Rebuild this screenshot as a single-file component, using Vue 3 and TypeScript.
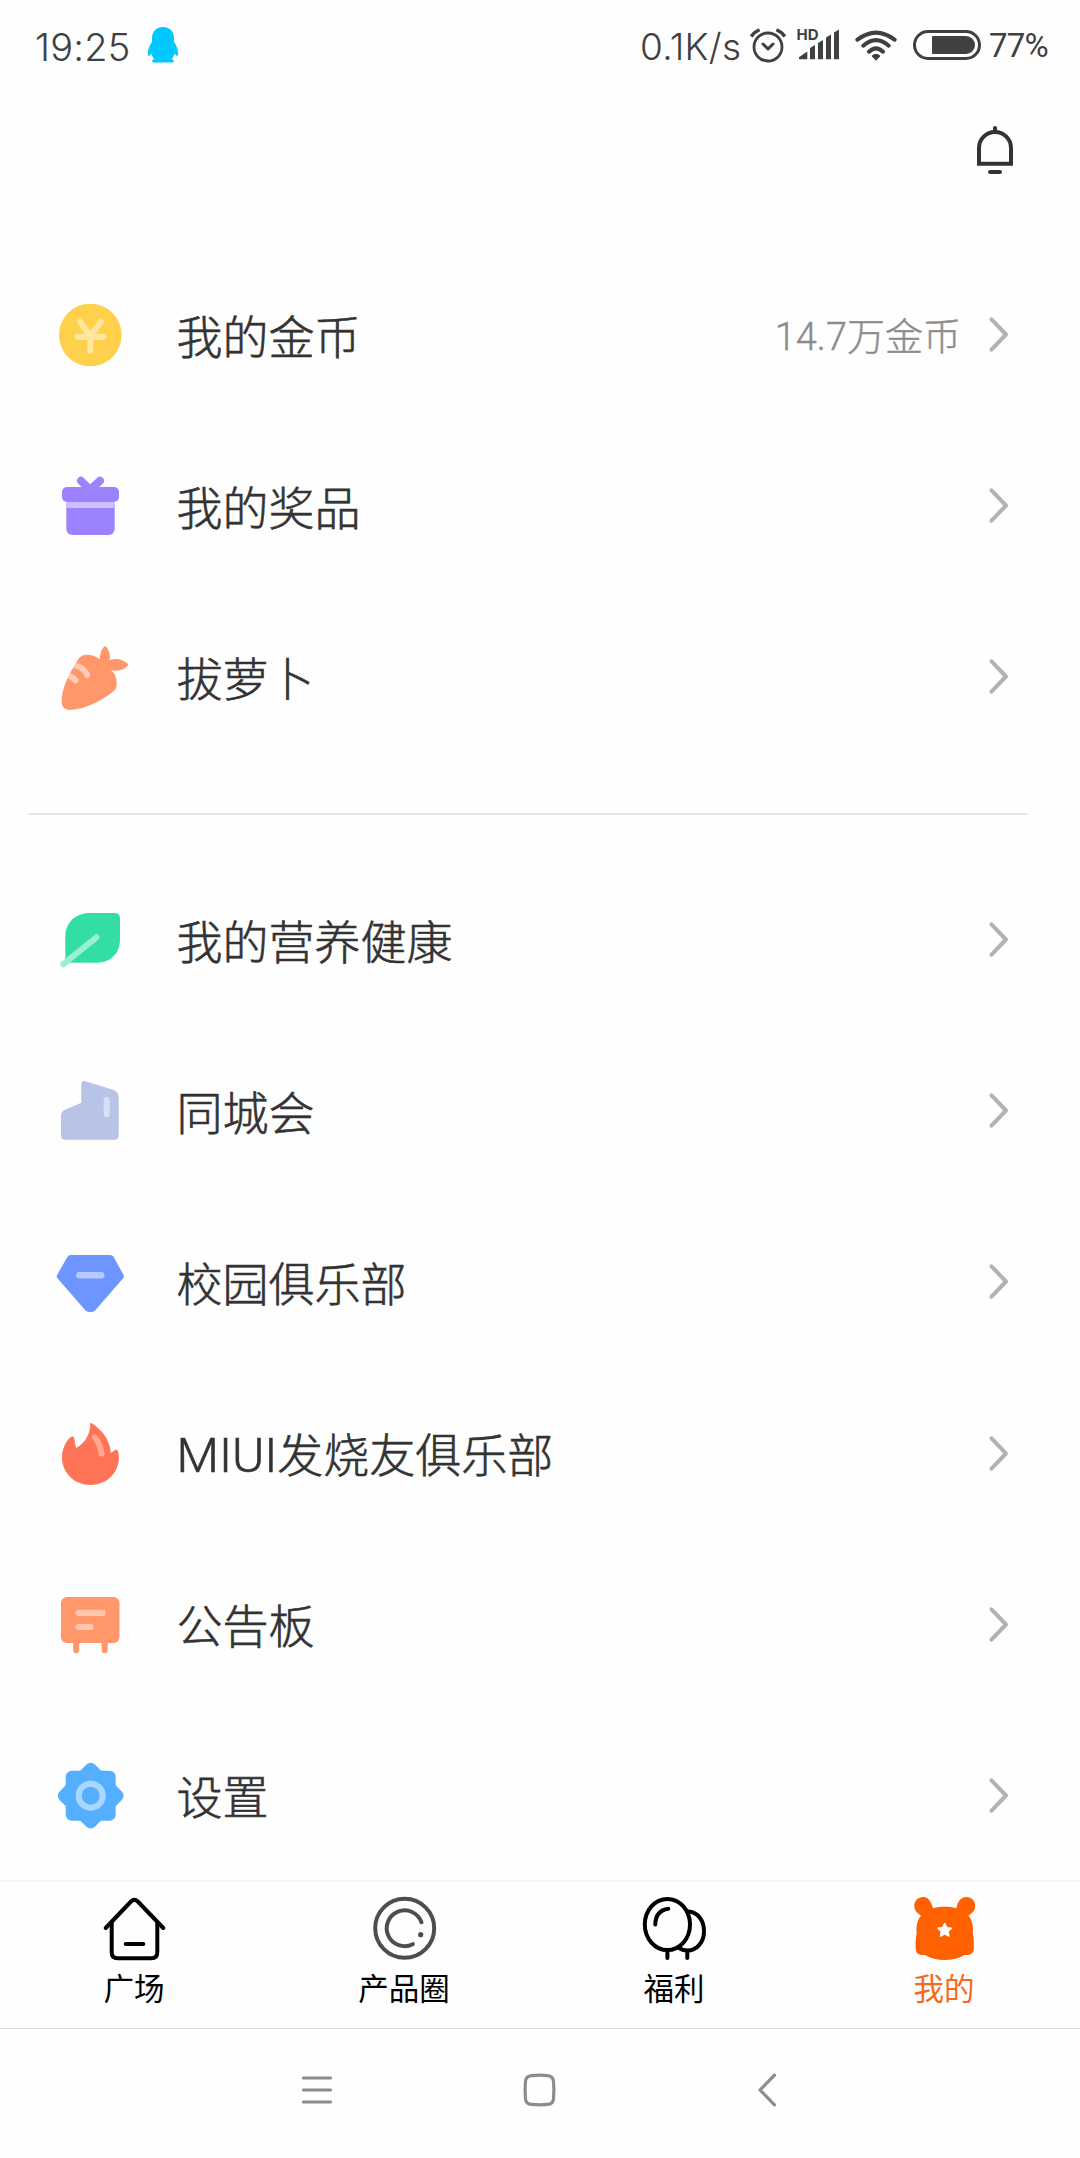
<script setup lang="ts">
interface MenuItem {
  icon: string
  label: string
  latin?: string
  amount?: string
  unit?: string
}

const groups: MenuItem[][] = [
  [
    { icon: 'coin', label: '我的金币', amount: '14.7', unit: '万金币' },
    { icon: 'gift', label: '我的奖品' },
    { icon: 'carrot', label: '拔萝卜' },
  ],
  [
    { icon: 'leaf', label: '我的营养健康' },
    { icon: 'city', label: '同城会' },
    { icon: 'diamond', label: '校园俱乐部' },
    { icon: 'flame', latin: 'MIUI', label: '发烧友俱乐部' },
    { icon: 'board', label: '公告板' },
    { icon: 'gear', label: '设置' },
  ],
]

const tabs = [
  { icon: 'home', label: '广场' },
  { icon: 'circle', label: '产品圈' },
  { icon: 'balloon', label: '福利' },
  { icon: 'bear', label: '我的' },
]
const activeTab = 'bear'
</script>

<template>
  <div class="screen">
    <header class="status">
      <span class="time">19:25</span>
      <svg class="penguin" width="34" height="38" viewBox="0 0 34 38">
        <path fill="#00c8ff" d="M17 1C10.500 1 6 5.500 6 12v4C3.500 19 1.700 24 2 28.500c.2 1.700 1.200 1.700 2.200.4l1.300-1.500c.5 2.200 1.400 4 3 5.700-2 .7-2.700 1.600-2.300 2.500.4.900 1.200 1 2.300 1h17c1.100 0 1.900-.1 2.300-1 .4-.9-.3-1.800-2.300-2.500 1.600-1.700 2.500-3.500 3-5.700l1.300 1.500c1 1.300 2 1.300 2.200-.4.3-4.500-1.500-9.500-4-12.500v-4C28 5.500 23.500 1 17 1z" />
      </svg>
      <span class="speed">0.1K/s</span>
      <svg class="indicators" width="236" height="42" viewBox="0 0 236 42">
        <g fill="none" stroke="#404040" stroke-linecap="round">
          <circle cx="20" cy="23" r="14" stroke-width="2.8" />
          <path stroke-width="3" stroke-linejoin="round" d="M15 20l5 4.800 5-4.800" />
          <path stroke-width="3.400" stroke-linecap="butt" d="M3.200 12.500Q6 8 11.600 5.700M36.800 12.500Q34 8 28.400 5.700" />
          <path stroke-width="4" d="M109.400 15.700Q128 1.500 146.600 15.700M115.300 21.700Q128 10.500 140.700 21.700M121 27.700Q128 21 135 27.700" />
          <rect x="166.500" y="7.500" width="65" height="27" rx="13.500" stroke-width="3" />
        </g>
        <g fill="#404040">
          <text class="hd" x="48.500" y="16">HD</text>
          <path d="M51 35.300v-2l8.300-5.800v7.800zM62 35.300V24l5-3v14.300zM70 35.300V19l5-3v19.300zM78 35.300V13.500l5-3v24.800zM86 35.300V8.500l5-3v29.800z" />
          <path d="M124 32q4-3.300 8 0l-4 4.300z" stroke="#404040" stroke-linejoin="round" />
          <path d="M185 12h33a9 9 0 0 1 0 18h-33a1 1 0 0 1-1-1V13a1 1 0 0 1 1-1z" />
        </g>
      </svg>
      <span class="battery">77%</span>
    </header>

    <div class="topbar">
      <svg width="50" height="60" viewBox="0 0 50 60" fill="none" stroke="#333" stroke-width="4">
        <path d="M9 43.800V28a16 16 0 0 1 32 0v15.800z" />
        <path stroke-linecap="round" d="M25 8v4M20 52h10" />
      </svg>
    </div>

    <main>
      <section v-for="(group, g) in groups" :key="g" class="group">
        <div v-for="item in group" :key="item.icon" class="row">
          <svg class="icon" width="81" height="81" viewBox="0 0 81 81" stroke-linecap="round" stroke-linejoin="round">
            <g v-if="item.icon === 'coin'">
              <circle cx="40.300" cy="41" r="31.300" fill="#ffd04b" />
              <path fill="none" stroke="#ffe79f" stroke-width="6" d="M30 28l10.300 13.700L51 28M27.500 42.700h26M40.300 42.700v14" />
            </g>
            <g v-else-if="item.icon === 'gift'">
              <path fill="none" stroke="#9c82ff" stroke-width="8" d="M31 15.800l9.300 9 9.700-9" />
              <rect x="16.300" y="34" width="48.400" height="36" rx="6" fill="#9c82ff" />
              <rect x="12" y="22" width="57" height="15" rx="5" fill="#9c82ff" />
              <path fill="#cbbfff" d="M16.300 37h48.400v6H16.300z" />
            </g>
            <g v-else-if="item.icon === 'carrot'">
              <clipPath id="carrot-body">
                <path d="M26 27C29 21 32 18.700 37.300 18.700 42 18.700 46 20.500 50 23.300h10L61 34C66 38 67 45 66.700 49c-.2 3.500-2 6-6 8.500C49 66 35 73 20 74c-6 0-8.500-3.500-8.300-9C12 52 17.500 41 26 27z" />
              </clipPath>
              <path fill="#ff976b" d="M26 27C29 21 32 18.700 37.300 18.700 42 18.700 46 20.500 50 23.300 49.400 17.500 52 12.500 54.500 10.200q.5-.4 1 0C58.500 13 61 18.500 59.500 24 66.500 21.500 73.500 23.500 78.300 28.300q.3.400 0 .8C74.500 34 67.500 36 61 34 66 38 67 45 66.700 49c-.2 3.500-2 6-6 8.500C49 66 35 73 20 74c-6 0-8.500-3.500-8.300-9C12 52 17.500 41 26 27z" />
              <path clip-path="url(#carrot-body)" fill="none" stroke="#ffcbb5" stroke-width="6" d="M18 29.500C26 28 33.500 31.500 37.200 39M13 38.500Q22 40 25.700 44.200" />
            </g>
            <g v-else-if="item.icon === 'leaf'">
              <path fill="#32dea4" d="M15.300 63.700v-26C15.300 23.500 25.500 14 40 14h24.500q5.500 0 5.500 5.500V40C70 54 61 63.700 46.500 63.700z" />
              <path fill="none" stroke="#98efd1" stroke-width="6" d="M13.300 65.200l33.200-26.900" />
            </g>
            <g v-else-if="item.icon === 'city'">
              <path fill="#b8c3e8" d="M31.300 32.700V14.500q0-4.300 4.200-3.300L63 19.700q5.700 2 5.700 8V65.500q0 4.200-4.200 4.200H15.200q-4.200 0-4.200-4.200V46q0-5 4.500-6.500z" />
              <path stroke="#d9dff4" stroke-width="6" d="M56.700 30v14.300" />
            </g>
            <g v-else-if="item.icon === 'diamond'">
              <path fill="#6e94ff" d="M20.500 14h40q2 0 3 1.700L73.500 34q.9 1.700-.4 3.200L45.300 69.200q-5 4.300-10 0L7.500 37.200q-1.300-1.500-.4-3.200L17.500 15.700q1-1.700 3-1.700z" />
              <path stroke="#b6c9ff" stroke-width="6.400" d="M29.300 34.300h22" />
            </g>
            <g v-else-if="item.icon === 'flame'" transform="matrix(1 0 0 .968 0 -.9)">
              <path fill="#ff7457" d="M40.300 11.500q.2-.8 1-.3C51.500 17.500 60 28.500 60.800 42c1.500-.3 2.400-1.500 4-2.600 1.300-.8 2.600-.4 3.100 1C68.500 42.500 68.900 45 68.900 47c0 16-12.500 28.400-28.400 28.400S12 63 12 47c0-8.500 3.500-16.500 8.500-21 1.700-1.300 3.300-.8 3.700 1 .8 4 1 7.500 2 10C34.500 32.500 40.500 23 40.300 11.500z" />
              <path fill="none" stroke="#ffa592" stroke-width="6" d="M44.800 26Q50 32.500 51.600 43" />
            </g>
            <g v-else-if="item.icon === 'board'">
              <path stroke="#ff976b" stroke-width="6" d="M26.200 56v10.200M54.700 56v10.200" />
              <rect x="11" y="13" width="58.500" height="46" rx="6" fill="#ff976b" />
              <path stroke="#ffc6ad" stroke-width="6.200" d="M28.600 28.800H52.700M28.600 43H40.500" />
            </g>
            <g v-else>
              <rect x="15.700" y="15.700" width="50" height="50" rx="6" fill="#55afff" />
              <rect x="15.700" y="15.700" width="50" height="50" rx="6" fill="#55afff" transform="rotate(45 40.700 40.700)" />
              <circle cx="40.700" cy="40.700" r="12" fill="none" stroke="#aad7ff" stroke-width="6" />
            </g>
          </svg>
          <span class="label"><span v-if="item.latin" class="latin">{{ item.latin }}</span>{{ item.label }}</span>
          <span v-if="item.amount" class="value"><span class="amount">{{ item.amount }}</span>{{ item.unit }}</span>
          <svg class="chevron" width="24" height="41" viewBox="0 0 24 41">
            <path fill="none" stroke="#b2b2b2" stroke-width="4" stroke-linecap="round" stroke-linejoin="round" d="M3.500 5.300L18 20.500 3.500 35.700" />
          </svg>
        </div>
      </section>
    </main>

    <nav class="tabs">
      <div v-for="tab in tabs" :key="tab.icon" class="tab" :class="{ active: tab.icon === activeTab }">
        <svg width="80" height="70" viewBox="0 0 80 70" fill="none" stroke="#000" stroke-width="4" stroke-linecap="round" stroke-linejoin="round">
          <g v-if="tab.icon === 'home'">
            <path d="M10.700 35L36 8.500q3.400-3.200 6.800 0L68.300 35" />
            <path d="M16.700 30v29.500q0 5.800 5.800 5.800h34q5.800 0 5.800-5.800V30M30.700 51h17.600" />
          </g>
          <g v-else-if="tab.icon === 'circle'" stroke="#4d4d4d">
            <circle cx="39.700" cy="35.300" r="29.500" />
            <path d="M56.500 29.300A17.900 17.900 0 1 0 47.800 51.200" />
            <circle cx="55.700" cy="41.700" r="2.600" fill="#4d4d4d" stroke="none" />
          </g>
          <g v-else-if="tab.icon === 'balloon'">
            <ellipse cx="32.400" cy="31.500" rx="22.600" ry="25.600" />
            <path d="M54 18.500C63 19.500 69 27.500 69 38.300 69 49.500 61.500 57.500 52.500 57.500q-4.500 0-8-2.200" />
            <path d="M32.400 58v7M52.300 58v7M33.300 15.700Q20.500 17.500 20.300 31.500" />
          </g>
          <g v-else>
            <path fill="#ff6100" stroke="none" d="M28 15.200C35 13.300 44.500 13.300 51.500 15.200 52.500 8.500 56 4 61.500 4 66.500 4 70.200 8 70.200 12.700 70.200 17.500 67 20.500 63.500 22.500 67.500 27.500 68.600 34 67.800 40 69 45.500 69 50.500 68.800 56.500 68.500 60.500 65 62.500 59.500 62 54 65.500 47 67 39.700 67 32.500 67 25.500 65.500 20 62 14.500 62.500 11 60.500 10.700 56.500 10.500 50.500 10.500 45.500 11.700 40 10.900 34 12 27.500 16 22.500 12.500 20.500 9.300 17.500 9.300 12.700 9.300 8 13 4 18 4 23.500 4 26 8.500 28 15.200z" />
            <path fill="#fff" stroke="#fff" stroke-width="1.500" d="M39.700 30.500l2.100 4.200 4.600.6-3.400 3.200.9 4.600-4.200-2.200-4.200 2.200.9-4.600-3.400-3.200 4.600-.6z" />
          </g>
        </svg>
        <span class="tab-label">{{ tab.label }}</span>
      </div>
    </nav>

    <footer class="system">
      <svg width="36" height="36" viewBox="0 0 36 36"><path d="M4.500 6h27M4.500 18h27M4.500 30h27" /></svg>
      <svg width="36" height="36" viewBox="0 0 36 36"><path d="M9.500 3.600Q17.500 2.800 25.500 3.600 31 4 31.500 9.200 32.300 18 31.500 26.800 31 32 25.500 32.400 17.500 33.200 9.500 32.400 4 32 3.500 26.800 2.700 18 3.500 9.200 4 4 9.500 3.600z" /></svg>
      <svg width="36" height="36" viewBox="0 0 36 36"><path d="M24.500 3.200L10 18l14.500 14.800" /></svg>
    </footer>
  </div>
</template>

<style>
body {
  margin: 0;
  background: #fefefe;
}
</style>

<style scoped>
.screen {
  width: 1080px;
  height: 2158px;
  display: flex;
  flex-direction: column;
  overflow: hidden;
  background: #fefefe;
  font-family: 'Noto Sans CJK SC', sans-serif;
  color: #333;
}
svg {
  display: block;
  flex: none;
}
.status {
  height: 90px;
  flex: none;
  display: flex;
  align-items: center;
  box-sizing: border-box;
  padding-left: 35px;
  color: #404040;
  font-family: Inter, Roboto, sans-serif;
  font-weight: 350;
  white-space: nowrap;
}
.time {
  width: 111px;
  font-size: 38px;
  letter-spacing: 0.200px;
  line-height: 44px;
  padding-top: 4px;
  box-sizing: border-box;
}
.speed {
  margin-left: 460px;
  width: 108px;
  font-size: 37px;
  letter-spacing: 0.300px;
  line-height: 44px;
  padding-top: 4px;
}
.battery {
  margin-left: 5px;
  font-family: Roboto, sans-serif;
  font-size: 33px;
  font-weight: 400;
  letter-spacing: -0.800px;
}
.hd {
  font: 700 15px Inter, sans-serif;
}
.topbar {
  height: 159px;
  flex: none;
  display: flex;
  justify-content: flex-end;
  box-sizing: border-box;
  padding: 30px 60px 0 0;
}
main {
  flex: 1 1 0;
  min-height: 0;
  overflow: hidden;
}
.group:first-child {
  padding-bottom: 39.400px;
}
.group + .group::before {
  content: '';
  display: block;
  height: 2px;
  width: 1000px;
  margin: 11px 0 39px 28px;
  background: #e6e6e6;
}
.row {
  height: 171.200px;
  display: flex;
  align-items: center;
  box-sizing: border-box;
  padding: 0 68px 0 50px;
}
.label {
  margin-left: 45.500px;
  padding-bottom: 2px;
  font-size: 46px;
  font-weight: 300;
  line-height: 60px;
  white-space: nowrap;
  -webkit-text-stroke: 0.600px #333;
}
.latin {
  font-family: Roboto, sans-serif;
  font-size: 49px;
  line-height: 1;
}
.value {
  margin-left: auto;
  padding-bottom: 2px;
  font-size: 38px;
  font-weight: 300;
  line-height: 56px;
  color: #8c8c8c;
  -webkit-text-stroke: 0.400px #8c8c8c;
}
.amount {
  font-family: Roboto, sans-serif;
  font-size: 38px;
  line-height: 1;
}
.chevron {
  margin-left: auto;
}
.value + .chevron {
  margin-left: 27px;
}
.tabs {
  height: 146px;
  flex: none;
  display: grid;
  grid-template-columns: repeat(4, 1fr);
  border-top: 2px solid #f6f6f6;
}
.tab {
  display: flex;
  flex-direction: column;
  align-items: center;
  padding-top: 11px;
  color: #000;
}
.tab-label {
  margin: 2px 2px 0 0;
  font-size: 30.500px;
  line-height: 44px;
}
.active {
  color: #f76a1c;
}
.system {
  height: 130px;
  flex: none;
  box-sizing: border-box;
  border-top: 1px solid #dedede;
  display: flex;
  padding: 43px 0 0 299px;
}
.system svg:nth-child(2) {
  margin: 0 192px 0 187px;
}
.system path {
  fill: none;
  stroke: #8c8c8c;
  stroke-width: 3.200px;
  stroke-linecap: round;
  stroke-linejoin: round;
}
</style>
